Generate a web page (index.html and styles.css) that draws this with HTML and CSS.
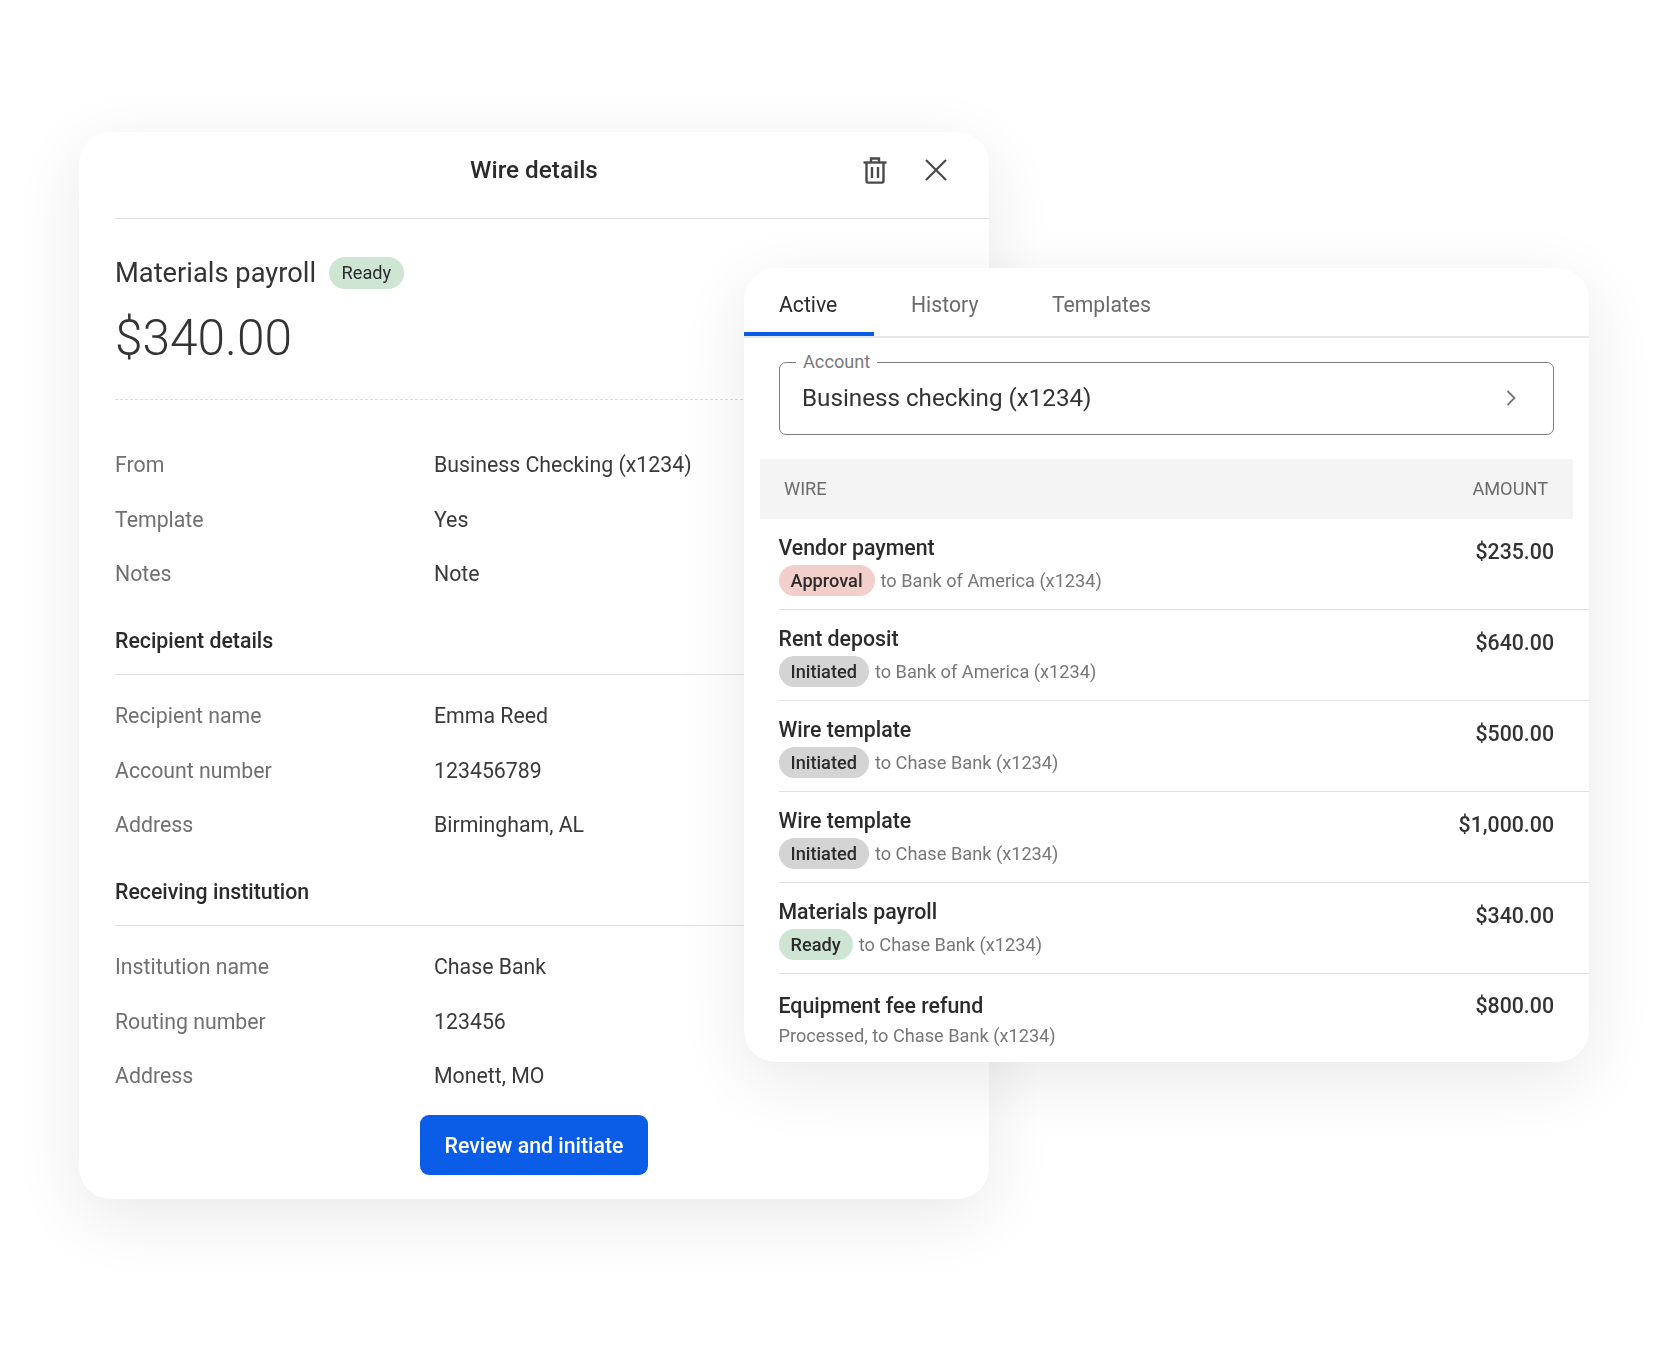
FILE: index.html
```html
<!DOCTYPE html>
<html lang="en">
<head>
  <meta charset="UTF-8" />
  <title>Wires</title>
  <link rel="stylesheet" href="styles.css">
</head>
<body>
  <div class="stage">
    <div class="details-card">
      <div class="details-header">
        <h1>Wire details</h1>
        <svg class="icon-trash" width="26" height="28" viewBox="0 0 26 28" fill="none" stroke="#4a4a4a" stroke-width="2.4">
          <path d="M1.5 6.5h23" />
          <path d="M9 6V2.5h8V6" />
          <path d="M4.5 6.5V25q0 1.6 1.6 1.6h13.8q1.6 0 1.6-1.6V6.5" />
          <path d="M10 11v11M16 11v11" />
        </svg>
        <svg class="icon-close" width="24" height="24" viewBox="0 0 24 24" fill="none" stroke="#4a4a4a" stroke-width="2.2">
          <path d="M2 2l20 20M22 2L2 22" />
        </svg>
      </div>

      <div class="summary">
        <div class="summary-title">
          <span>Materials payroll</span>
          <span class="chip chip-ready chip-light">Ready</span>
        </div>
        <div class="summary-amount">$340.00</div>
      </div>

      <div class="detail-rows first-rows">
        <div class="detail-row"><span>From</span><span>Business Checking (x1234)</span></div>
        <div class="detail-row"><span>Template</span><span>Yes</span></div>
        <div class="detail-row"><span>Notes</span><span>Note</span></div>
      </div>

      <h2 class="section-title">Recipient details</h2>
      <div class="detail-rows">
        <div class="detail-row"><span>Recipient name</span><span>Emma Reed</span></div>
        <div class="detail-row"><span>Account number</span><span>123456789</span></div>
        <div class="detail-row"><span>Address</span><span>Birmingham, AL</span></div>
      </div>

      <h2 class="section-title">Receiving institution</h2>
      <div class="detail-rows">
        <div class="detail-row"><span>Institution name</span><span>Chase Bank</span></div>
        <div class="detail-row"><span>Routing number</span><span>123456</span></div>
        <div class="detail-row"><span>Address</span><span>Monett, MO</span></div>
      </div>

      <div class="details-footer">
        <button class="btn-primary">Review and initiate</button>
      </div>
    </div>

    <div class="wires-card">
      <div class="tabs">
        <div class="tab tab-active">Active</div>
        <div class="tab tab-history">History</div>
        <div class="tab tab-templates">Templates</div>
      </div>

      <div class="account-field">
        <span class="account-label">Account</span>
        <span class="account-value">Business checking (x1234)</span>
        <svg width="12" height="18" viewBox="0 0 12 18" fill="none" stroke="#777" stroke-width="1.8">
          <path d="M2.5 2l7 7-7 7" />
        </svg>
      </div>

      <div class="table-head">
        <span>WIRE</span>
        <span>AMOUNT</span>
      </div>

      <div class="wire-row">
        <div class="wire-main">
          <div class="wire-name">Vendor payment</div>
          <div class="wire-sub"><span class="chip chip-approval">Approval</span> to Bank of America (x1234)</div>
        </div>
        <div class="wire-amount">$235.00</div>
      </div>
      <div class="wire-row">
        <div class="wire-main">
          <div class="wire-name">Rent deposit</div>
          <div class="wire-sub"><span class="chip chip-initiated">Initiated</span> to Bank of America (x1234)</div>
        </div>
        <div class="wire-amount">$640.00</div>
      </div>
      <div class="wire-row">
        <div class="wire-main">
          <div class="wire-name">Wire template</div>
          <div class="wire-sub"><span class="chip chip-initiated">Initiated</span> to Chase Bank (x1234)</div>
        </div>
        <div class="wire-amount">$500.00</div>
      </div>
      <div class="wire-row">
        <div class="wire-main">
          <div class="wire-name">Wire template</div>
          <div class="wire-sub"><span class="chip chip-initiated">Initiated</span> to Chase Bank (x1234)</div>
        </div>
        <div class="wire-amount">$1,000.00</div>
      </div>
      <div class="wire-row">
        <div class="wire-main">
          <div class="wire-name">Materials payroll</div>
          <div class="wire-sub"><span class="chip chip-ready">Ready</span> to Chase Bank (x1234)</div>
        </div>
        <div class="wire-amount">$340.00</div>
      </div>
      <div class="wire-row wire-row-last">
        <div class="wire-main">
          <div class="wire-name">Equipment fee refund</div>
          <div class="wire-sub">Processed, to Chase Bank (x1234)</div>
        </div>
        <div class="wire-amount">$800.00</div>
      </div>
    </div>
  </div>
</body>
</html>
```

FILE: styles.css
```css
* {
  box-sizing: border-box;
}

html, body {
  margin: 0;
  padding: 0;
  background: #fff;
}

body {
  font-family: Roboto, "Liberation Sans", sans-serif;
  color: #2b2b2b;
  overflow: hidden;
}

.stage {
  position: relative;
  width: 1668px;
  height: 1362px;
  padding: 132px 0 0 79px;
  filter: blur(0.45px);
}

.details-card {
  width: 910px;
  height: 1067px;
  background: #fff;
  border-radius: 32px;
  padding-left: 36px;
  box-shadow: 0 18px 70px rgba(0, 0, 0, 0.09);
}

.details-header {
  position: relative;
  height: 87px;
  border-bottom: 1.5px solid #e2e2e2;
  text-align: center;
  padding-right: 36px;
}

.details-header h1 {
  margin: 0;
  padding-top: 23px;
  font-size: 24.3px;
  line-height: 30px;
  font-weight: 500;
}

.icon-trash {
  position: absolute;
  top: 24px;
  right: 101px;
}

.icon-close {
  position: absolute;
  top: 26px;
  right: 41px;
}

.summary {
  height: 181px;
  margin-right: 36px;
  padding-top: 36px;
  border-bottom: 1.5px dashed #dcdcdc;
}

.summary-title {
  display: flex;
  align-items: center;
  gap: 13px;
  font-size: 27.3px;
  line-height: 36px;
  color: #333;
}

.summary-amount {
  margin-top: 17px;
  font-size: 49.6px;
  line-height: 60px;
  font-weight: 300;
  color: #333;
}

.chip {
  display: inline-flex;
  align-items: center;
  height: 31px;
  padding: 0 12px;
  border-radius: 16px;
  font-size: 18.2px;
  font-weight: 500;
  color: #2b2b2b;
}

.chip-light {
  height: 32px;
  padding: 0 12.5px;
  font-weight: 400;
}

.chip-ready {
  background: #cfe5d3;
}

.chip-approval {
  background: #f3cfcc;
}

.chip-initiated {
  background: #d4d4d4;
}

.first-rows {
  margin-top: 37px;
}

.detail-row {
  display: grid;
  grid-template-columns: 319px 1fr;
  height: 54.7px;
  align-items: center;
  font-size: 21.3px;
}

.detail-row span:first-child {
  color: #707070;
}

.detail-row span:last-child {
  color: #3a3a3a;
}

.section-title {
  margin: 23px 0 13px;
  height: 51px;
  padding-top: 2px;
  border-bottom: 1.5px solid #e0e0e0;
  font-size: 21.3px;
  line-height: 30px;
  font-weight: 500;
  color: #2b2b2b;
}

.details-footer {
  display: flex;
  justify-content: center;
  padding-right: 36px;
  margin-top: 12px;
}

.btn-primary {
  width: 228px;
  height: 60px;
  border: none;
  border-radius: 9px;
  background: #0b5ce6;
  color: #fff;
  font-family: inherit;
  font-size: 21.3px;
  font-weight: 500;
}

/* floats over the details card */
.wires-card {
  position: absolute;
  left: 744px;
  top: 268px;
  width: 845px;
  height: 794px;
  background: #fff;
  border-radius: 32px;
  overflow: hidden;
  box-shadow: 0 18px 70px rgba(0, 0, 0, 0.09);
}

.tabs {
  display: flex;
  height: 70px;
  border-bottom: 2px solid #e6e6e6;
  font-size: 21.2px;
}

.tab {
  height: 68px;
  padding-top: 23px;
  line-height: 28px;
  color: #6b6b6b;
}

.tab-active {
  width: 130px;
  padding-left: 35px;
  color: #2b2b2b;
  border-bottom: 4px solid #0b5ce6;
}

.tab-history {
  margin-left: 37px;
}

.tab-templates {
  margin-left: 73.5px;
}

.account-field {
  position: relative;
  display: flex;
  align-items: center;
  justify-content: space-between;
  height: 73px;
  margin: 24px 35px 0;
  padding: 0 36px 2px 22px;
  border: 1.5px solid #7d7d7d;
  border-radius: 7px;
}

.account-label {
  position: absolute;
  left: 16px;
  top: -13px;
  padding: 0 7px;
  background: #fff;
  font-size: 18.2px;
  line-height: 24px;
  color: #7a7a7a;
}

.account-value {
  font-size: 24.2px;
  color: #333;
}

.table-head {
  display: flex;
  justify-content: space-between;
  align-items: center;
  height: 60px;
  margin: 24px 16px 0;
  padding: 0 25px 2px 24px;
  background: #f4f4f4;
  font-size: 18.2px;
  color: #6b6b6b;
}

.wire-row {
  display: flex;
  justify-content: space-between;
  height: 91px;
  margin-left: 34.5px;
  padding: 15px 35px 0 0;
  border-bottom: 1.5px solid #e2e2e2;
}

.wire-row-last {
  border-bottom: none;
  padding-top: 18px;
}

.wire-row-last .wire-sub {
  margin-top: 0;
}

.wire-row-last .wire-amount {
  padding-top: 0;
}

.wire-name {
  font-size: 21.3px;
  line-height: 28px;
  font-weight: 500;
  color: #2b2b2b;
}

.wire-sub {
  margin-top: 3px;
  display: flex;
  align-items: center;
  gap: 6px;
  height: 31px;
  font-size: 18.2px;
  color: #777;
}

.wire-amount {
  padding-top: 4px;
  font-size: 21.3px;
  line-height: 28px;
  font-weight: 500;
  color: #333;
}
```
